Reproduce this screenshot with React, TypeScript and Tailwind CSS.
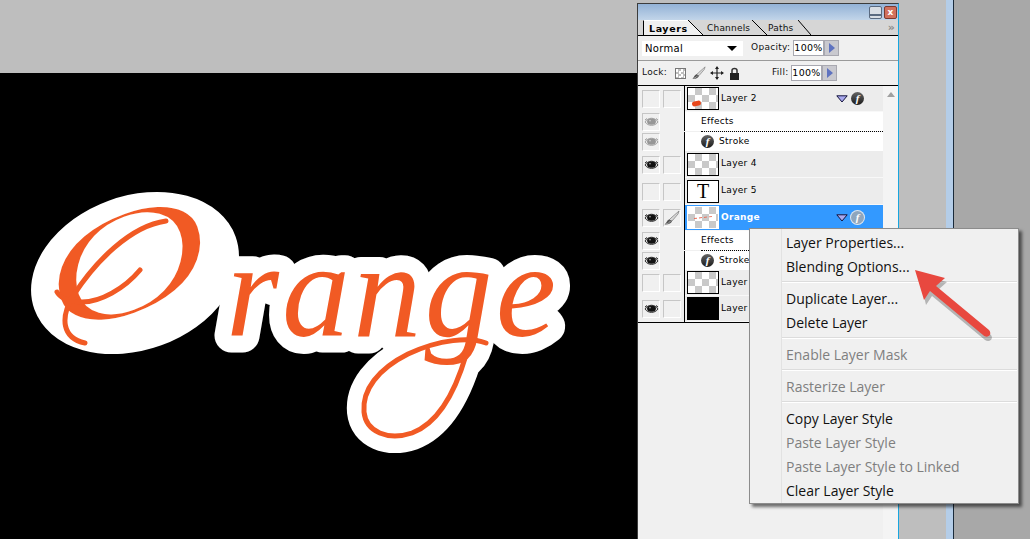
import type { ReactNode } from 'react';

const checker = 'bg-[repeating-conic-gradient(#c9c9c9_0_25%,#ffffff_0_50%)] bg-[length:14px_14px]';

function Eye({ dim }: { dim?: boolean }) {
  return (
    <svg width="15" height="12" viewBox="0 0 15 12" className={dim ? 'opacity-40' : ''}>
      <path d="M1 6 C4 1 11 1 14 6 C11 10.5 4 10.5 1 6 Z" fill="#d8d8d8" stroke="#333" strokeWidth="1" />
      <ellipse cx="7.5" cy="5.6" rx="4.4" ry="3.2" fill="#111" />
      <path d="M1 4 L3 2.5 M14 4 L12 2.5" stroke="#222" />
      <circle cx="6" cy="4.6" r="0.9" fill="#999" />
    </svg>
  );
}

function Brush({ size = 16 }: { size?: number }) {
  return (
    <svg width={size} height={size} viewBox="0 0 16 16">
      <path d="M15 1 L7 8 L5 10 L8 11 L14 4 Z" fill="#d8d8d8" stroke="#777" strokeWidth="0.7" />
      <path d="M5 9.5 C3 10 2.5 13 0.5 14.5 C4 15 7.5 13.5 8 11 Z" fill="#555" />
      <path d="M2 14 C4 13.5 5.5 12.5 6.5 11" stroke="#bbb" strokeWidth="0.8" fill="none" />
    </svg>
  );
}

function Fx({ light }: { light?: boolean }) {
  return (
    <span className={`flex h-[13px] w-[13px] items-center justify-center rounded-full font-['Liberation_Serif',serif] text-[11px] font-bold leading-none italic tracking-normal text-white ${light ? 'bg-[#8fa6bd] ring-1 ring-[#dfe7ef]' : 'bg-gradient-to-b from-[#666666] to-[#1c1c1c]'}`}>
      f
    </span>
  );
}

function Triangle() {
  return (
    <svg width="12" height="8" viewBox="0 0 12 8">
      <path d="M0.8 0.8 H11.2 L6 7 Z" fill="#a9a9ee" stroke="#14143c" strokeWidth="1" />
    </svg>
  );
}

function Box({ children }: { children?: ReactNode }) {
  return (
    <div className="flex h-[18px] w-[18px] shrink-0 items-center justify-center border border-[#c6c6c6] border-b-white border-r-white">
      {children}
    </div>
  );
}

function Stepper() {
  return (
    <div className="flex h-[16px] w-[15px] items-center justify-center border border-[#a8a8b0] bg-[#c9c9cf]">
      <div className="h-0 w-0 border-y-[5px] border-l-[6px] border-y-transparent border-l-[#5f73c0]" />
    </div>
  );
}

interface LayerRowProps {
  h: string;
  eye?: boolean;
  dimEye?: boolean;
  brush?: boolean;
  thumb?: ReactNode;
  name?: string;
  fx?: boolean;
  selected?: boolean;
  effect?: 'title' | 'stroke';
}

function LayerRow({ h, eye, dimEye, brush, thumb, name, fx, selected, effect }: LayerRowProps) {
  return (
    <div className={`flex ${h}`}>
      <div className="flex w-[47px] shrink-0 items-center gap-[3px] border-r border-r-black pl-[4px]">
        {effect ? (
          <div className={`flex h-[18px] w-[18px] items-center justify-center border ${eye || dimEye ? 'border-[#c6c6c6] border-b-white border-r-white' : 'border-transparent'}`}>
            {(eye || dimEye) && <Eye dim={dimEye} />}
          </div>
        ) : (
          <>
            <Box>{(eye || dimEye) && <Eye dim={dimEye} />}</Box>
            <Box>{brush && <Brush />}</Box>
          </>
        )}
      </div>
      {effect === 'title' && (
        <div className="flex flex-1 items-center bg-white pl-[16px] text-black">Effects</div>
      )}
      {effect === 'stroke' && (
        <div className="flex flex-1 items-center gap-[5px] bg-white pl-[16px] text-black">
          <Fx />
          <span>Stroke</span>
        </div>
      )}
      {!effect && (
        <div className={`flex flex-1 items-center border-b border-b-[#f8f8f8] pl-[2px] ${selected ? 'bg-[#3399ff]' : 'bg-[#ececec]'}`}>
          <div className={`h-[23px] w-[32px] shrink-0 overflow-hidden border ${selected ? 'border-white' : 'border-black'}`}>
            {thumb}
          </div>
          <span className={`ml-[2px] ${selected ? 'font-bold text-white' : 'text-black'}`}>{name}</span>
          {fx && (
            <div className="ml-auto mr-[19px] flex items-center gap-[3px]">
              <Triangle />
              <Fx light={selected} />
            </div>
          )}
        </div>
      )}
    </div>
  );
}

function MenuItem({ label, disabled }: { label: string; disabled?: boolean }) {
  return (
    <div className={`flex h-[24px] items-center pl-[36px] ${disabled ? 'text-[#7f7f7f]' : 'text-[#111]'}`}>
      {label}
    </div>
  );
}

function MenuSeparator() {
  return <div className="my-[3px] ml-[32px] mr-[1px] h-[2px] border-b border-b-white bg-[#dcdcdc]" />;
}

function OrangeLogo() {
  const loop = 'M486 343 C470 337 440 339 408 354 C378 369 362 390 364 412 C366 432 388 441 412 433 C436 424 454 396 466 355 L470 338';
  const swash = 'M166 221 C130 226 95 262 73 296 C60 318 62 338 85 343 M140 270 C125 288 100 303 80 302 C68 301 60 298 57 292';
  return (
    <svg viewBox="0 73 637 466" className="h-full w-full">
      {/* white sticker backing */}
      <g fill="#fff" stroke="#fff">
        <ellipse cx="135" cy="273" rx="104" ry="74" transform="rotate(-20 135 273)" strokeWidth="6" />
        <path d={loop} strokeWidth="34" strokeLinejoin="round" />
        <text x="226" y="336" className="font-['Liberation_Serif',serif] text-[136px] italic" strokeWidth="34" strokeLinejoin="round" textLength="330">range</text>
      </g>
      {/* the O is thinned down with a white outline drawn over its fill */}
      <text
        transform="translate(60 340) rotate(-20) scale(1.42 0.86)"
        className="fill-[#f15a24] stroke-white font-['Liberation_Serif',serif] text-[172px] italic"
        strokeWidth="4"
      >
        O
      </text>
      <path d={swash} fill="none" stroke="#f15a24" strokeWidth="5" strokeLinecap="round" />
      <text x="226" y="336" className="fill-[#f15a24] font-['Liberation_Serif',serif] text-[136px] italic" textLength="330">
        range
      </text>
      {/* swash under the g */}
      <path d={loop} fill="none" stroke="#f15a24" strokeWidth="5" strokeLinecap="round" />
    </svg>
  );
}

export default function App() {
  return (
    <div className="relative flex h-[539px] w-[1030px] overflow-hidden bg-[#bebebe]">
      <div className="flex w-[637px] shrink-0 flex-col">
        <div className="h-[73px] bg-[#bebebe]" />
        <div className="flex-1 bg-black">
          <OrangeLogo />
        </div>
      </div>

      {/* Layers palette */}
      <div className="mt-[3px] flex w-[262px] shrink-0 flex-col border-l border-r border-t border-l-[#3c3c3c] border-r-[#17a6e0] border-t-[#3c3c3c] bg-[#f0f0f0] font-['DejaVu_Sans',sans-serif] text-[9px] tracking-[0.3px] text-black">
        <div className="flex h-[16px] items-center justify-end gap-[2px] bg-gradient-to-b from-[#93b2d6] to-[#c2d5e9] pr-[1px]">
          <div className="flex h-[13px] w-[13px] items-end rounded-[2px] border border-[#5a6a80] bg-[#d8dde4] pb-[2px]">
            <div className="h-[2px] w-full bg-[#5a6a80]" />
          </div>
          <div className="flex h-[13px] w-[13px] items-center justify-center rounded-[2px] border border-[#7a3a30] bg-[#d2705c] text-[9px] font-bold leading-none text-white">
            x
          </div>
        </div>

        <div className="flex h-[16px] items-end border-b border-b-black bg-[#d6d6d6] pl-[5px] text-[9px] tracking-[0.2px]">
          <div className="flex h-[15px] w-[45px] items-center border-l border-t border-l-black border-t-white bg-[#f0f0f0] pl-[5px] pt-[2px] text-[9.5px] font-bold tracking-[0.6px]">
            Layers
          </div>
          <svg width="15" height="15" viewBox="0 0 15 15" className="shrink-0">
            <path d="M0 0 L15 15 H0 Z" fill="#f0f0f0" />
            <path d="M0 0 L15 15" stroke="#000" fill="none" />
          </svg>
          <div className="flex h-[15px] w-[49px] items-center pl-[4px] pt-[2px] text-[#111]">Channels</div>
          <svg width="15" height="15" viewBox="0 0 15 15" className="shrink-0">
            <path d="M0 0 L15 15" stroke="#000" fill="none" />
          </svg>
          <div className="flex h-[15px] w-[31px] items-center pl-[1px] pt-[2px] text-[#111]">Paths</div>
          <svg width="13" height="15" viewBox="0 0 13 15" className="shrink-0">
            <path d="M0 0 L13 15" stroke="#000" fill="none" />
          </svg>
          <span className="ml-auto mr-[3px] text-[11px] font-bold leading-[15px] text-[#8a8a8a]">»</span>
        </div>

        <div className="flex h-[25px] items-center border-b border-b-[#9a9a9a] pl-[4px]">
          <div className="flex h-[15px] w-[101px] items-center justify-between bg-white pl-[3px] pr-[6px] text-[10px]">
            <span>Normal</span>
            <div className="h-0 w-0 border-x-[5px] border-t-[5px] border-x-transparent border-t-black" />
          </div>
          <span className="ml-[8px] w-[42px] text-[#111]">Opacity:</span>
          <div className="flex h-[16px] w-[31px] items-center justify-center border border-[#a8a8b0] bg-white text-[9.5px]">100%</div>
          <Stepper />
        </div>

        <div className="flex h-[25px] items-center border-b border-b-black pl-[4px]">
          <span className="w-[33px] text-[#111]">Lock:</span>
          <div className="h-[11px] w-[11px] border border-[#777] bg-[repeating-conic-gradient(#bdbdbd_0_25%,#ffffff_0_50%)] bg-[length:5px_5px]" />
          <div className="ml-[6px]">
            <Brush size={14} />
          </div>
          <svg width="14" height="14" viewBox="0 0 14 14" className="ml-[4px]">
            <path d="M7 1 V13 M1 7 H13" stroke="#222" strokeWidth="1.2" />
            <path d="M7 0 L5 3 H9 Z M7 14 L5 11 H9 Z M0 7 L3 5 V9 Z M14 7 L11 5 V9 Z" fill="#222" />
          </svg>
          <svg width="11" height="13" viewBox="0 0 11 13" className="ml-[5px]">
            <path d="M3 6 V3.5 C3 0.8 8 0.8 8 3.5 V6" fill="none" stroke="#333" strokeWidth="1.5" />
            <rect x="1" y="6" width="9" height="7" fill="#222" />
          </svg>
          <span className="ml-[32px] w-[19px] text-[#111]">Fill:</span>
          <div className="flex h-[16px] w-[31px] items-center justify-center border border-[#a8a8b0] bg-white text-[9.5px]">100%</div>
          <Stepper />
        </div>

        <div className="flex h-[237px] border-b border-b-black">
          <div className="flex flex-1 flex-col">
            <LayerRow
              h="h-[26px]"
              name="Layer 2"
              fx
              thumb={
                <div className={`flex h-full w-full items-end pb-[3px] pl-[4px] ${checker}`}>
                  <div className="h-[5px] w-[9px] -rotate-12 rounded-full bg-[#e8481c]" />
                </div>
              }
            />
            <LayerRow h="h-[19px]" dimEye effect="title" />
            <div className="ml-[63px] border-t border-dotted border-t-black" />
            <LayerRow h="h-[19px]" dimEye effect="stroke" />
            <LayerRow h="h-[27px]" eye name="Layer 4" thumb={<div className={`h-full w-full ${checker}`} />} />
            <LayerRow
              h="h-[27px]"
              name="Layer 5"
              thumb={
                <div className="flex h-full w-full items-center justify-center bg-white font-['Liberation_Serif',serif] text-[20px] leading-none tracking-normal text-black">
                  T
                </div>
              }
            />
            <LayerRow
              h="h-[26px]"
              eye
              brush
              selected
              name="Orange"
              fx
              thumb={
                <div className={`flex h-full w-full items-center justify-center ${checker}`}>
                  <div className="h-[2px] w-[18px] -rotate-6 border-t border-dashed border-t-[#e8705c]" />
                </div>
              }
            />
            <LayerRow h="h-[19px]" eye effect="title" />
            <div className="ml-[63px] border-t border-dotted border-t-black" />
            <LayerRow h="h-[19px]" eye effect="stroke" />
            <LayerRow h="h-[26px]" name="Layer" thumb={<div className={`h-full w-full ${checker}`} />} />
            <LayerRow h="h-[26px]" eye name="Layer" thumb={<div className="h-full w-full bg-black" />} />
          </div>
          <div className="flex w-[15px] shrink-0 justify-center bg-[#f4f4f4] pt-[6px]">
            <div className="h-0 w-0 border-x-[4px] border-b-[5px] border-x-transparent border-b-[#a0a0a0]" />
          </div>
        </div>

        <div className="flex flex-1 justify-end">
          <div className="w-[15px] bg-[#f4f4f4]" />
        </div>
      </div>

      <div className="w-[47px] shrink-0 bg-[#bebebe]" />
      <div className="w-[8px] shrink-0 border-r border-r-[#1a2a3a] bg-[#b4cde8]" />
      <div className="flex-1 bg-[#a8a8a8]" />

      {/* Context menu */}
      <div className="absolute left-[749px] top-[228px] w-[270px] border border-[#8c8c8c] bg-[#f0f0f0] py-[1px] font-['Open_Sans',sans-serif] text-[14px] shadow-[3px_3px_3px_rgba(0,0,0,0.55)]">
        <div className="absolute bottom-0 left-[31px] top-0 w-px bg-[#e2e2e2]" />
        <MenuItem label="Layer Properties..." />
        <MenuItem label="Blending Options..." />
        <MenuSeparator />
        <MenuItem label="Duplicate Layer..." />
        <MenuItem label="Delete Layer" />
        <MenuSeparator />
        <MenuItem label="Enable Layer Mask" disabled />
        <MenuSeparator />
        <MenuItem label="Rasterize Layer" disabled />
        <MenuSeparator />
        <MenuItem label="Copy Layer Style" />
        <MenuItem label="Paste Layer Style" disabled />
        <MenuItem label="Paste Layer Style to Linked" disabled />
        <MenuItem label="Clear Layer Style" />
      </div>

      {/* Red call-out arrow */}
      <svg width="90" height="80" viewBox="0 0 90 80" className="absolute left-[910px] top-[265px]">
        <path d="M8 7 L36 14 L27 22 L80 67 C83 71 78 75 74 72 L21 28 L15 37 Z" fill="#000" opacity="0.25" transform="translate(1 3)" />
        <path d="M5 5 L35 13 L26 21 L79 65 C83 70 77 74 73 70 L20 26 L14 35 Z" fill="#e8483f" />
      </svg>
    </div>
  );
}
